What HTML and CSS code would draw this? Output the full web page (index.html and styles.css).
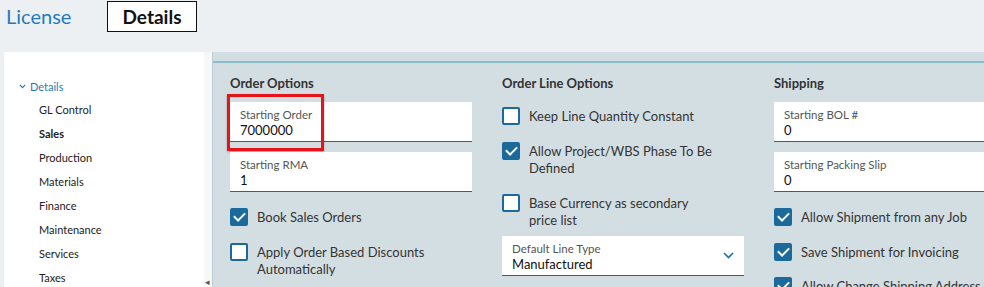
FILE: index.html
```html
<!DOCTYPE html>
<html>
<head>
<meta charset="utf-8">
<link rel="stylesheet" href="styles.css">
</head>
<body>
<div class="page">
  <header class="header">
    <span class="crumb">License</span>
    <span class="tab">Details</span>
  </header>
  <div class="main">
    <nav class="sidebar">
      <div class="tree-root"><svg class="chev" width="7" height="5" viewBox="0 0 7 5"><path d="M0.8 0.8 L3.5 3.6 L6.2 0.8" fill="none" stroke="#1f7bbd" stroke-width="1.2"/></svg>Details</div>
      <ul class="tree">
        <li>GL Control</li>
        <li class="active">Sales</li>
        <li>Production</li>
        <li>Materials</li>
        <li>Finance</li>
        <li>Maintenance</li>
        <li>Services</li>
        <li>Taxes</li>
      </ul>
    </nav>
    <div class="splitter"><span class="arrow">◂</span></div>
    <section class="content">
      <div class="columns">
        <div class="col">
          <h3 class="col-title">Order Options</h3>
          <div class="field highlight">
            <span class="field-label">Starting Order</span>
            <span class="field-value">7000000</span>
          </div>
          <div class="field">
            <span class="field-label">Starting RMA</span>
            <span class="field-value">1</span>
          </div>
          <label class="check after-field"><span class="box on"></span><span class="check-text">Book Sales Orders</span></label>
          <label class="check"><span class="box"></span><span class="check-text">Apply Order Based Discounts Automatically</span></label>
        </div>
        <div class="col">
          <h3 class="col-title">Order Line Options</h3>
          <label class="check first"><span class="box"></span><span class="check-text">Keep Line Quantity Constant</span></label>
          <label class="check"><span class="box on"></span><span class="check-text">Allow Project/WBS Phase To Be Defined</span></label>
          <label class="check"><span class="box"></span><span class="check-text">Base Currency as secondary price list</span></label>
          <div class="field select">
            <span class="field-label">Default Line Type</span>
            <span class="field-value">Manufactured</span>
            <svg class="dd" width="11" height="7" viewBox="0 0 11 7"><path d="M1 1 L5.5 5.5 L10 1" fill="none" stroke="#1f6fa8" stroke-width="1.6"/></svg>
          </div>
        </div>
        <div class="col">
          <h3 class="col-title">Shipping</h3>
          <div class="field">
            <span class="field-label">Starting BOL #</span>
            <span class="field-value">0</span>
          </div>
          <div class="field">
            <span class="field-label">Starting Packing Slip</span>
            <span class="field-value">0</span>
          </div>
          <label class="check after-field"><span class="box on"></span><span class="check-text nowrap">Allow Shipment from any Job</span></label>
          <label class="check"><span class="box on"></span><span class="check-text nowrap">Save Shipment for Invoicing</span></label>
          <label class="check"><span class="box on"></span><span class="check-text nowrap">Allow Change Shipping Address</span></label>
        </div>
      </div>
    </section>
  </div>
</div>
</body>
</html>
```

FILE: styles.css
```css
* { box-sizing: border-box; }
html, body { margin: 0; padding: 0; }
body {
  width: 984px;
  height: 287px;
  overflow: hidden;
  background: #edf0f3;
  font-family: Lato, "Noto Sans", sans-serif;
  color: #333;
}
.page { height: 287px; display: flex; flex-direction: column; }
.header {
  height: 52px;
  display: flex;
  align-items: flex-start;
  flex: none;
}
.crumb {
  margin: 3px 0 0 6px;
  font-size: 20px;
  line-height: 26px;
  color: #1f7bbd;
  width: 101px;
}
.tab {
  margin-top: 1px;
  width: 90px;
  height: 31px;
  border: 1px solid #111;
  background: #fff;
  color: #111;
  font-weight: 700;
  font-size: 19px;
  line-height: 29px;
  text-align: center;
}
.main { flex: 1; display: flex; min-height: 0; }
.sidebar {
  margin-left: 4px;
  width: 200px;
  background: #fff;
  padding-top: 25px;
  font-size: 11px;
  flex: none;
}
.tree-root {
  color: #1f7bbd;
  display: flex;
  align-items: center;
  padding-left: 15px;
  height: 18px;
}
.chev { margin-right: 4px; }
.tree { list-style: none; margin: 0; padding: 0 0 0 35px; }
.tree li { height: 24px; line-height: 24px; color: #222; }
.tree li:first-child { margin-top: 3px; }
.tree .active { font-weight: 700; }
.splitter {
  width: 9px;
  background: #f6f7f8;
  border-right: 1px solid #bccbd2;
  position: relative;
  flex: none;
}
.arrow {
  position: absolute;
  left: 1px;
  bottom: 0;
  font-size: 9px;
  color: #555;
}
.content {
  flex: 1;
  background: #d3dee3;
  padding-top: 9px;
  overflow: hidden;
  min-width: 0;
}
.columns {
  border-top: 2px solid #8dbdca;
  display: flex;
  gap: 30px;
  padding: 10px 0 0 17px;
}
.col { width: 242px; flex: none; display: flex; flex-direction: column; }
.col-title {
  margin: 0 0 9px 0;
  font-size: 13px;
  font-weight: 700;
  line-height: 20px;
  color: #333;
}
.field {
  position: relative;
  background: #fff;
  height: 40px;
  border-bottom: 1px solid #1c6a9c;
  padding: 5px 0 0 10px;
  display: flex;
  flex-direction: column;
  margin-bottom: 10px;
  flex: none;
}
.field-label { font-size: 11.5px; line-height: 15px; color: #555; }
.field-value { font-size: 13px; line-height: 16px; color: #111; }
.highlight::after {
  content: "";
  position: absolute;
  left: -3px;
  top: -8px;
  width: 91px;
  height: 51px;
  border: 3px solid #e5141b;
  box-shadow: 0 1px 2px rgba(0,0,0,0.3);
}
.select .dd { position: absolute; right: 10px; top: 16px; }
.select { margin-top: -10px; }
.check {
  display: flex;
  align-items: flex-start;
  margin: 0 0 16px 0;
}
.check.first { margin-top: 5px; }
.check.after-field { margin-top: 6px; }
.box {
  width: 18px;
  height: 18px;
  border: 2px solid #1c6a9c;
  border-radius: 2px;
  background: #fff;
  flex: none;
  margin: 0 9px 0 0;
  position: relative;
}
.box.on { background: #1c6a9c; }
.box.on::after {
  content: "";
  position: absolute;
  left: 4px;
  top: 0px;
  width: 5px;
  height: 9px;
  border: solid #fff;
  border-width: 0 2px 2px 0;
  transform: rotate(45deg);
}
.check-text { font-size: 13px; line-height: 17.5px; padding-top: 1px; color: #333; width: 190px; }
.check-text.nowrap { white-space: nowrap; width: auto; }
```
